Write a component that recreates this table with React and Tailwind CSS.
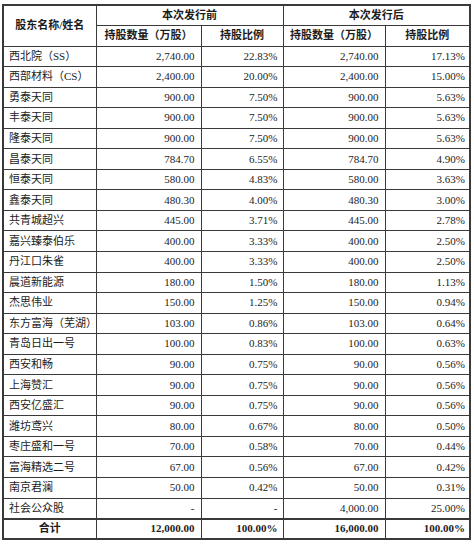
import React from 'react';

const rows = [
  ['西北院（SS）', '2,740.00', '22.83%', '2,740.00', '17.13%'],
  ['西部材料（CS）', '2,400.00', '20.00%', '2,400.00', '15.00%'],
  ['勇泰天同', '900.00', '7.50%', '900.00', '5.63%'],
  ['丰泰天同', '900.00', '7.50%', '900.00', '5.63%'],
  ['隆泰天同', '900.00', '7.50%', '900.00', '5.63%'],
  ['昌泰天同', '784.70', '6.55%', '784.70', '4.90%'],
  ['恒泰天同', '580.00', '4.83%', '580.00', '3.63%'],
  ['鑫泰天同', '480.30', '4.00%', '480.30', '3.00%'],
  ['共青城超兴', '445.00', '3.71%', '445.00', '2.78%'],
  ['嘉兴臻泰伯乐', '400.00', '3.33%', '400.00', '2.50%'],
  ['丹江口朱雀', '400.00', '3.33%', '400.00', '2.50%'],
  ['晨道新能源', '180.00', '1.50%', '180.00', '1.13%'],
  ['杰思伟业', '150.00', '1.25%', '150.00', '0.94%'],
  ['东方富海（芜湖）', '103.00', '0.86%', '103.00', '0.64%'],
  ['青岛日出一号', '100.00', '0.83%', '100.00', '0.63%'],
  ['西安和畅', '90.00', '0.75%', '90.00', '0.56%'],
  ['上海赞汇', '90.00', '0.75%', '90.00', '0.56%'],
  ['西安亿盛汇', '90.00', '0.75%', '90.00', '0.56%'],
  ['潍坊鸢兴', '80.00', '0.67%', '80.00', '0.50%'],
  ['枣庄盛和一号', '70.00', '0.58%', '70.00', '0.44%'],
  ['富海精选二号', '67.00', '0.56%', '67.00', '0.42%'],
  ['南京君澜', '50.00', '0.42%', '50.00', '0.31%'],
  ['社会公众股', '-', '-', '4,000.00', '25.00%'],
];

const cell = 'border border-[#3a3a3a] p-0 leading-none';

export default function App() {
  return (
    <div
      className="bg-white w-[474px] h-[553px] pt-[4px] pl-[2px] text-[#1c1c1c] text-[11px]"
      style={{ fontFamily: '"Liberation Serif", "Noto Sans CJK SC", serif' }}
    >
      <table className="table-fixed border-collapse w-[467px] border-2 border-[#3a3a3a]">
        <colgroup>
          <col className="w-[93px]" />
          <col className="w-[105px]" />
          <col className="w-[82px]" />
          <col className="w-[102px]" />
          <col className="w-[85px]" />
        </colgroup>
        <thead>
          <tr className="h-[20px]">
            <th rowSpan={2} className={`${cell} font-bold text-center`}>股东名称/姓名</th>
            <th colSpan={2} className={`${cell} font-bold text-center`}>本次发行前</th>
            <th colSpan={2} className={`${cell} font-bold text-center`}>本次发行后</th>
          </tr>
          <tr className="h-[21px]">
            <th className={`${cell} font-bold text-center`}>持股数量（万股）</th>
            <th className={`${cell} font-bold text-center`}>持股比例</th>
            <th className={`${cell} font-bold text-center`}>持股数量（万股）</th>
            <th className={`${cell} font-bold text-center`}>持股比例</th>
          </tr>
        </thead>
        <tbody>
          {rows.map((r) => (
            <tr key={r[0]} className="h-[20.56px]">
              <td className={`${cell} text-left pl-[5px]`}>{r[0]}</td>
              <td className={`${cell} text-right pr-[6px]`}>{r[1]}</td>
              <td className={`${cell} text-right pr-[5px]`}>{r[2]}</td>
              <td className={`${cell} text-right pr-[6px]`}>{r[3]}</td>
              <td className={`${cell} text-right pr-[4px]`}>{r[4]}</td>
            </tr>
          ))}
          <tr className="h-[20px] border-t-2 border-[#3a3a3a]">
            <td className={`${cell} border-t-2 text-center font-bold`}>合计</td>
            <td className={`${cell} border-t-2 text-right pr-[6px] font-bold`}>12,000.00</td>
            <td className={`${cell} border-t-2 text-right pr-[5px] font-bold`}>100.00%</td>
            <td className={`${cell} border-t-2 text-right pr-[6px] font-bold`}>16,000.00</td>
            <td className={`${cell} border-t-2 text-right pr-[4px] font-bold`}>100.00%</td>
          </tr>
        </tbody>
      </table>
    </div>
  );
}
